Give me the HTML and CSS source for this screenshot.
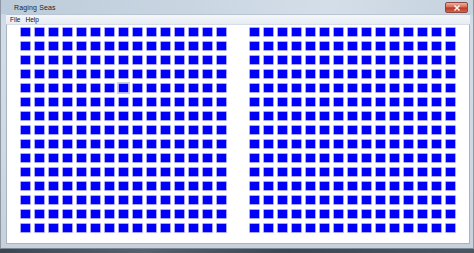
FILE: index.html
```html
<!DOCTYPE html>
<html>
<head>
<meta charset="utf-8">
<title>Raging Seas</title>
<link rel="stylesheet" href="styles.css">
</head>
<body>
<div class="screen">
  <div class="window">
    <div class="titlebar">
      <span class="title">Raging Seas</span>
      <div class="close"><svg width="8" height="6" viewBox="0 0 8 6"><path d="M1.5 0.5 L6.5 5.5 M6.5 0.5 L1.5 5.5" stroke="#fff" stroke-width="1.4"/></svg></div>
    </div>
    <div class="menubar"><span>File</span><span>Help</span></div>
    <div class="client">
      <div class="grid">
<i></i><i></i><i></i><i></i><i></i><i></i><i></i><i></i><i></i><i></i><i></i><i></i><i></i><i></i><i></i>
<i></i><i></i><i></i><i></i><i></i><i></i><i></i><i></i><i></i><i></i><i></i><i></i><i></i><i></i><i></i>
<i></i><i></i><i></i><i></i><i></i><i></i><i></i><i></i><i></i><i></i><i></i><i></i><i></i><i></i><i></i>
<i></i><i></i><i></i><i></i><i></i><i></i><i></i><i></i><i></i><i></i><i></i><i></i><i></i><i></i><i></i>
<i></i><i></i><i></i><i></i><i></i><i></i><i></i><i class="hot"></i><i></i><i></i><i></i><i></i><i></i><i></i><i></i>
<i></i><i></i><i></i><i></i><i></i><i></i><i></i><i></i><i></i><i></i><i></i><i></i><i></i><i></i><i></i>
<i></i><i></i><i></i><i></i><i></i><i></i><i></i><i></i><i></i><i></i><i></i><i></i><i></i><i></i><i></i>
<i></i><i></i><i></i><i></i><i></i><i></i><i></i><i></i><i></i><i></i><i></i><i></i><i></i><i></i><i></i>
<i></i><i></i><i></i><i></i><i></i><i></i><i></i><i></i><i></i><i></i><i></i><i></i><i></i><i></i><i></i>
<i></i><i></i><i></i><i></i><i></i><i></i><i></i><i></i><i></i><i></i><i></i><i></i><i></i><i></i><i></i>
<i></i><i></i><i></i><i></i><i></i><i></i><i></i><i></i><i></i><i></i><i></i><i></i><i></i><i></i><i></i>
<i></i><i></i><i></i><i></i><i></i><i></i><i></i><i></i><i></i><i></i><i></i><i></i><i></i><i></i><i></i>
<i></i><i></i><i></i><i></i><i></i><i></i><i></i><i></i><i></i><i></i><i></i><i></i><i></i><i></i><i></i>
<i></i><i></i><i></i><i></i><i></i><i></i><i></i><i></i><i></i><i></i><i></i><i></i><i></i><i></i><i></i>
<i></i><i></i><i></i><i></i><i></i><i></i><i></i><i></i><i></i><i></i><i></i><i></i><i></i><i></i><i></i>
      </div>
      <div class="grid">
<i></i><i></i><i></i><i></i><i></i><i></i><i></i><i></i><i></i><i></i><i></i><i></i><i></i><i></i><i></i>
<i></i><i></i><i></i><i></i><i></i><i></i><i></i><i></i><i></i><i></i><i></i><i></i><i></i><i></i><i></i>
<i></i><i></i><i></i><i></i><i></i><i></i><i></i><i></i><i></i><i></i><i></i><i></i><i></i><i></i><i></i>
<i></i><i></i><i></i><i></i><i></i><i></i><i></i><i></i><i></i><i></i><i></i><i></i><i></i><i></i><i></i>
<i></i><i></i><i></i><i></i><i></i><i></i><i></i><i></i><i></i><i></i><i></i><i></i><i></i><i></i><i></i>
<i></i><i></i><i></i><i></i><i></i><i></i><i></i><i></i><i></i><i></i><i></i><i></i><i></i><i></i><i></i>
<i></i><i></i><i></i><i></i><i></i><i></i><i></i><i></i><i></i><i></i><i></i><i></i><i></i><i></i><i></i>
<i></i><i></i><i></i><i></i><i></i><i></i><i></i><i></i><i></i><i></i><i></i><i></i><i></i><i></i><i></i>
<i></i><i></i><i></i><i></i><i></i><i></i><i></i><i></i><i></i><i></i><i></i><i></i><i></i><i></i><i></i>
<i></i><i></i><i></i><i></i><i></i><i></i><i></i><i></i><i></i><i></i><i></i><i></i><i></i><i></i><i></i>
<i></i><i></i><i></i><i></i><i></i><i></i><i></i><i></i><i></i><i></i><i></i><i></i><i></i><i></i><i></i>
<i></i><i></i><i></i><i></i><i></i><i></i><i></i><i></i><i></i><i></i><i></i><i></i><i></i><i></i><i></i>
<i></i><i></i><i></i><i></i><i></i><i></i><i></i><i></i><i></i><i></i><i></i><i></i><i></i><i></i><i></i>
<i></i><i></i><i></i><i></i><i></i><i></i><i></i><i></i><i></i><i></i><i></i><i></i><i></i><i></i><i></i>
<i></i><i></i><i></i><i></i><i></i><i></i><i></i><i></i><i></i><i></i><i></i><i></i><i></i><i></i><i></i>
      </div>
    </div>
  </div>
  <div class="taskbar"></div>
</div>
</body>
</html>
```
FILE: styles.css
```css
html, body {
  margin: 0;
  padding: 0;
}
body {
  width: 474px;
  height: 253px;
  overflow: hidden;
  font-family: "Liberation Sans", Arial, sans-serif;
  background: #4a5560;
}
.screen {
  display: flex;
  flex-direction: column;
  width: 474px;
  height: 253px;
}
.window {
  display: flex;
  flex-direction: column;
  height: 249px;
  box-sizing: border-box;
  padding: 0 3px 4px 5px;
  background: linear-gradient(to bottom, #c4d2df 0%, #d3dde7 10%, #cfd9e3 60%, #c6d1dc 100%);
  border-left: 1px solid #8d98a4;
  border-right: 1px solid #8d98a4;
  border-bottom: 1px solid #7d8894;
}
.titlebar {
  height: 14px;
  display: flex;
  align-items: center;
  justify-content: space-between;
  background: linear-gradient(to right, #bccbd9, #c9d6e2 40%, #d4dee8 70%, #c5d2de);
  margin: 0 -3px 0 -5px;
  padding: 0 5px 0 13px;
}
.title {
  font-size: 7px;
  color: #1e1e1e;
  letter-spacing: 0.15px;
}
.close {
  width: 21px;
  height: 9px;
  margin-top: 1px;
  border-radius: 2px;
  background: linear-gradient(to bottom, #eab0a2 0%, #d87560 40%, #c03a22 55%, #d0644a 100%);
  border: 1px solid #8a4a40;
  display: flex;
  align-items: center;
  justify-content: center;
}
.menubar {
  height: 10px;
  display: flex;
  align-items: center;
  gap: 5px;
  padding-left: 4px;
  background: linear-gradient(to bottom, #f3f6fa, #e7ecf2);
  border-top: 1px solid #b9c5d2;
  box-sizing: border-box;
  font-size: 6.5px;
  color: #111;
}
.client {
  flex: 1;
  display: flex;
  gap: 24px;
  padding: 3px 0 0 14px;
  background: #fff;
  border: 1px solid #a9b4c0;
  border-top: 1px solid #d5dde6;
}
.grid {
  display: grid;
  grid-template-columns: repeat(15, 9px);
  grid-auto-rows: 8px;
  column-gap: 5px;
  row-gap: 6px;
  align-content: start;
}
.grid i {
  display: block;
  box-sizing: border-box;
  background: #0000fa;
  box-shadow: 0 0 0 0.6px #6a6af8;
}
.grid i.hot {
  outline: 1px solid #d2d2dc;
  outline-offset: 1.5px;
}
.taskbar {
  flex: 1;
  background: linear-gradient(to right, #3c4650, #55616d 30%, #3d4752 60%, #4b5661);
}
```
